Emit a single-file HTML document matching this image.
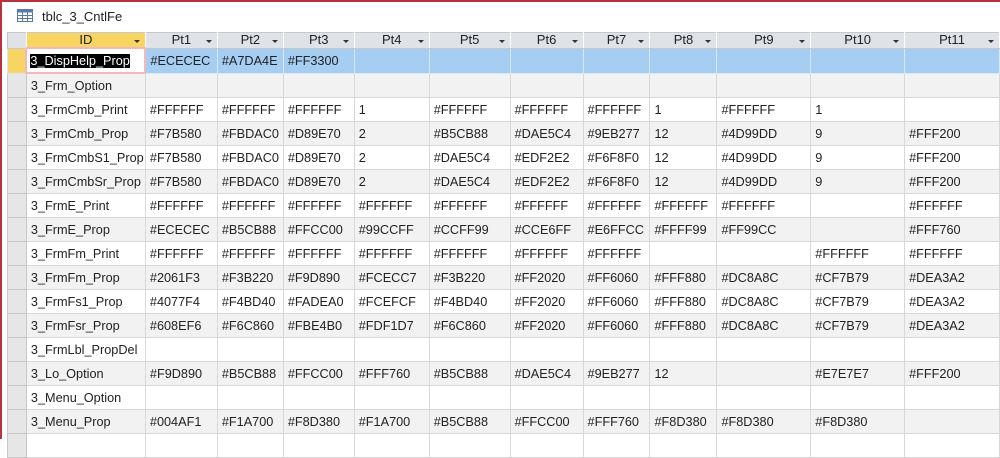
<!DOCTYPE html>
<html><head><style>
body{margin:0;width:1000px;height:439px;overflow:hidden;background:#fff;font-family:"Liberation Sans",Arial,sans-serif;position:relative}
.frame{position:absolute;left:0;top:0;width:1000px;height:439px;border-top:2px solid #b8323c;border-left:2px solid #b8323c;box-sizing:border-box;z-index:2;pointer-events:none}
.title{position:absolute;left:42px;top:9px;font-size:13px;color:#222}
.icon{position:absolute;left:17px;top:9px;width:16px;height:13px}
table{position:absolute;left:7px;top:32px;border-collapse:collapse;table-layout:fixed;font-size:12.7px;color:#222}
td,th{border:1px solid #d8d8d8;height:23px;padding:0 0 0 4px;white-space:nowrap;overflow:hidden}
th{height:14px;line-height:14px;background:#dfe3e8;font-weight:normal;text-align:center;position:relative;border-color:#c8c8c8 #fff #c8c8c8 #c0c4c8;font-size:13px;padding:0}
th:after{content:"";position:absolute;right:5px;top:7px;border:3px solid transparent;border-top:3px solid #333}
th.sel:after{display:none}
th.id{background:#f8d463}
td.s{background:#e6e6e6;border-color:#c8c8c8;padding:0}
tr:nth-child(odd) td{background:#f2f2f2}
tr:nth-child(odd) td.s{background:#e6e6e6}
tr.cur td{background:#a6cdf2;border-color:#d8e8f8}
tr.cur td.s{background:#f8d463}
tr.cur td.idc{background:#fff;border:2px solid #f4b8bc;padding-left:3px}
.hl{background:#000;color:#fff}
</style></head><body>
<div class="frame"></div>
<svg class="icon" viewBox="0 0 16 13"><rect x="0.5" y="0.5" width="15" height="12" fill="#fff" stroke="#5a7aa8"/><rect x="0.5" y="0.5" width="15" height="3" fill="#5a7aa8"/><path d="M5.5 3v10M10.5 3v10M0 6.5h16M0 9.5h16" stroke="#5a7aa8"/></svg>
<div class="title">tblc_3_CntlFe</div>
<table>
<colgroup><col style="width:19px"><col style="width:119px"><col style="width:72px"><col style="width:66px"><col style="width:71px"><col style="width:75px"><col style="width:81px"><col style="width:73px"><col style="width:67px"><col style="width:67px"><col style="width:94px"><col style="width:94px"><col style="width:95px"></colgroup>
<tr><th class="sel" style="background:#dfe3e8"></th><th class="id">ID</th><th>Pt1</th><th>Pt2</th><th>Pt3</th><th>Pt4</th><th>Pt5</th><th>Pt6</th><th>Pt7</th><th>Pt8</th><th>Pt9</th><th>Pt10</th><th>Pt11</th></tr>
<tr class="cur"><td class="s"></td><td class="idc"><span class="hl">3_DispHelp_Prop</span></td><td>#ECECEC</td><td>#A7DA4E</td><td>#FF3300</td><td></td><td></td><td></td><td></td><td></td><td></td><td></td><td></td></tr>
<tr><td class="s"></td><td>3_Frm_Option</td><td></td><td></td><td></td><td></td><td></td><td></td><td></td><td></td><td></td><td></td><td></td></tr>
<tr><td class="s"></td><td>3_FrmCmb_Print</td><td>#FFFFFF</td><td>#FFFFFF</td><td>#FFFFFF</td><td>1</td><td>#FFFFFF</td><td>#FFFFFF</td><td>#FFFFFF</td><td>1</td><td>#FFFFFF</td><td>1</td><td></td></tr>
<tr><td class="s"></td><td>3_FrmCmb_Prop</td><td>#F7B580</td><td>#FBDAC0</td><td>#D89E70</td><td>2</td><td>#B5CB88</td><td>#DAE5C4</td><td>#9EB277</td><td>12</td><td>#4D99DD</td><td>9</td><td>#FFF200</td></tr>
<tr><td class="s"></td><td>3_FrmCmbS1_Prop</td><td>#F7B580</td><td>#FBDAC0</td><td>#D89E70</td><td>2</td><td>#DAE5C4</td><td>#EDF2E2</td><td>#F6F8F0</td><td>12</td><td>#4D99DD</td><td>9</td><td>#FFF200</td></tr>
<tr><td class="s"></td><td>3_FrmCmbSr_Prop</td><td>#F7B580</td><td>#FBDAC0</td><td>#D89E70</td><td>2</td><td>#DAE5C4</td><td>#EDF2E2</td><td>#F6F8F0</td><td>12</td><td>#4D99DD</td><td>9</td><td>#FFF200</td></tr>
<tr><td class="s"></td><td>3_FrmE_Print</td><td>#FFFFFF</td><td>#FFFFFF</td><td>#FFFFFF</td><td>#FFFFFF</td><td>#FFFFFF</td><td>#FFFFFF</td><td>#FFFFFF</td><td>#FFFFFF</td><td>#FFFFFF</td><td></td><td>#FFFFFF</td></tr>
<tr><td class="s"></td><td>3_FrmE_Prop</td><td>#ECECEC</td><td>#B5CB88</td><td>#FFCC00</td><td>#99CCFF</td><td>#CCFF99</td><td>#CCE6FF</td><td>#E6FFCC</td><td>#FFFF99</td><td>#FF99CC</td><td></td><td>#FFF760</td></tr>
<tr><td class="s"></td><td>3_FrmFm_Print</td><td>#FFFFFF</td><td>#FFFFFF</td><td>#FFFFFF</td><td>#FFFFFF</td><td>#FFFFFF</td><td>#FFFFFF</td><td>#FFFFFF</td><td></td><td></td><td>#FFFFFF</td><td>#FFFFFF</td></tr>
<tr><td class="s"></td><td>3_FrmFm_Prop</td><td>#2061F3</td><td>#F3B220</td><td>#F9D890</td><td>#FCECC7</td><td>#F3B220</td><td>#FF2020</td><td>#FF6060</td><td>#FFF880</td><td>#DC8A8C</td><td>#CF7B79</td><td>#DEA3A2</td></tr>
<tr><td class="s"></td><td>3_FrmFs1_Prop</td><td>#4077F4</td><td>#F4BD40</td><td>#FADEA0</td><td>#FCEFCF</td><td>#F4BD40</td><td>#FF2020</td><td>#FF6060</td><td>#FFF880</td><td>#DC8A8C</td><td>#CF7B79</td><td>#DEA3A2</td></tr>
<tr><td class="s"></td><td>3_FrmFsr_Prop</td><td>#608EF6</td><td>#F6C860</td><td>#FBE4B0</td><td>#FDF1D7</td><td>#F6C860</td><td>#FF2020</td><td>#FF6060</td><td>#FFF880</td><td>#DC8A8C</td><td>#CF7B79</td><td>#DEA3A2</td></tr>
<tr><td class="s"></td><td>3_FrmLbl_PropDel</td><td></td><td></td><td></td><td></td><td></td><td></td><td></td><td></td><td></td><td></td><td></td></tr>
<tr><td class="s"></td><td>3_Lo_Option</td><td>#F9D890</td><td>#B5CB88</td><td>#FFCC00</td><td>#FFF760</td><td>#B5CB88</td><td>#DAE5C4</td><td>#9EB277</td><td>12</td><td></td><td>#E7E7E7</td><td>#FFF200</td></tr>
<tr><td class="s"></td><td>3_Menu_Option</td><td></td><td></td><td></td><td></td><td></td><td></td><td></td><td></td><td></td><td></td><td></td></tr>
<tr><td class="s"></td><td>3_Menu_Prop</td><td>#004AF1</td><td>#F1A700</td><td>#F8D380</td><td>#F1A700</td><td>#B5CB88</td><td>#FFCC00</td><td>#FFF760</td><td>#F8D380</td><td>#F8D380</td><td>#F8D380</td><td></td></tr>
<tr><td class="s"></td><td></td><td></td><td></td><td></td><td></td><td></td><td></td><td></td><td></td><td></td><td></td><td></td></tr>
</table>
</body></html>
